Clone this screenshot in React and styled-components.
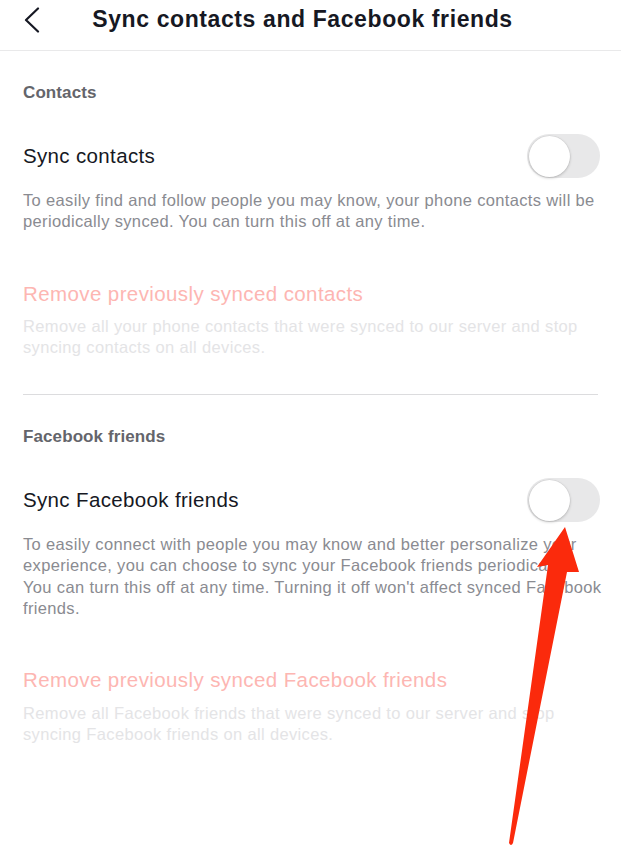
import React, { useState } from "react";
import styled, { createGlobalStyle } from "styled-components";

const GlobalStyle = createGlobalStyle`
  html, body {
    margin: 0;
    padding: 0;
    background: #ffffff;
  }
  body {
    font-family: "Liberation Sans", Arial, sans-serif;
    -webkit-font-smoothing: antialiased;
  }
`;

const Toggle = ({ on, onChange }) => (
  <Track $on={on} onClick={() => onChange(!on)}>
    <Knob $on={on} />
  </Track>
);

const App = () => {
  const [contacts, setContacts] = useState(false);
  const [facebook, setFacebook] = useState(false);

  return (
    <Page>
      <GlobalStyle />
      <Header>
        <BackButton aria-label="Back">
          <svg width="18" height="26" viewBox="0 0 18 26" fill="none">
            <path d="M15 1.5L3 13l12 11.5" stroke="#161823" strokeWidth="2.2" strokeLinecap="round" strokeLinejoin="round" />
          </svg>
        </BackButton>
        <Title>Sync contacts and Facebook friends</Title>
      </Header>

      <Content>
        <Section>
          <SectionHeader>Contacts</SectionHeader>
          <Row>
            <RowTitle>Sync contacts</RowTitle>
            <Toggle on={contacts} onChange={setContacts} />
          </Row>
          <Description>
            To easily find and follow people you may know, your phone contacts will be
            <br />
            periodically synced. You can turn this off at any time.
          </Description>
          <RemoveTitle>Remove previously synced contacts</RemoveTitle>
          <RemoveText>
            Remove all your phone contacts that were synced to our server and stop
            <br />
            syncing contacts on all devices.
          </RemoveText>
        </Section>

        <Divider />

        <Section>
          <SectionHeader>Facebook friends</SectionHeader>
          <Row>
            <RowTitle>Sync Facebook friends</RowTitle>
            <Toggle on={facebook} onChange={setFacebook} />
          </Row>
          <Description>
            To easily connect with people you may know and better personalize your
            <br />
            experience, you can choose to sync your Facebook friends periodically.
            <br />
            You can turn this off at any time. Turning it off won't affect synced Facebook
            <br />
            friends.
          </Description>
          <RemoveTitle>Remove previously synced Facebook friends</RemoveTitle>
          <RemoveText>
            Remove all Facebook friends that were synced to our server and stop
            <br />
            syncing Facebook friends on all devices.
          </RemoveText>
        </Section>
      </Content>

      <Arrow viewBox="0 0 621 853" width="621" height="853">
        <path
          d="M565 527 L537 567 L548 565 L509 843 Q511 847 513 843 L567 572 L579 572 Z"
          fill="#fb2a0c"
        />
      </Arrow>
    </Page>
  );
};

const Page = styled.div`
  position: relative;
  width: 621px;
  min-height: 853px;
  background: #ffffff;
  overflow: hidden;
`;

const Header = styled.header`
  display: flex;
  align-items: center;
  justify-content: center;
  position: relative;
  height: 51px;
  border-bottom: 1px solid #e9e9ea;
  box-sizing: border-box;
  padding: 0 16px 12px 0;
`;

const BackButton = styled.button`
  position: absolute;
  left: 23px;
  top: 7px;
  display: flex;
  padding: 0;
  border: none;
  background: none;
  cursor: pointer;
`;

const Title = styled.h1`
  margin: 0;
  font-size: 23px;
  font-weight: 700;
  color: #161823;
  letter-spacing: 0.6px;
  white-space: nowrap;
`;

const Content = styled.main`
  padding: 0 23px;
`;

const Section = styled.section`
  display: flex;
  flex-direction: column;
`;

const SectionHeader = styled.div`
  margin-top: 30px;
  font-size: 17px;
  line-height: 24px;
  font-weight: 700;
  color: #64656b;
  letter-spacing: 0.1px;
`;

const Row = styled.div`
  display: flex;
  align-items: center;
  justify-content: space-between;
  margin: 29px -2px 0 0;
  height: 44px;
`;

const RowTitle = styled.div`
  font-size: 20.5px;
  letter-spacing: 0.35px;
  color: #161823;
`;

const Track = styled.div`
  position: relative;
  width: 73px;
  height: 44px;
  border-radius: 22px;
  background: ${(p) => (p.$on ? "#20d5ec" : "#e8e8e9")};
  cursor: pointer;
  transition: background 0.2s;
`;

const Knob = styled.div`
  position: absolute;
  top: 1.5px;
  left: ${(p) => (p.$on ? "30.5px" : "1.5px")};
  width: 41px;
  height: 41px;
  border-radius: 50%;
  background: #ffffff;
  box-shadow: 0 1px 3px rgba(0, 0, 0, 0.22), 0 0 0 0.5px rgba(0, 0, 0, 0.06);
  transition: left 0.2s;
`;

const Description = styled.p`
  margin: 12px 0 0;
  font-size: 16.5px;
  line-height: 21.3px;
  letter-spacing: 0.35px;
  color: #8a8b91;
  white-space: nowrap;
`;

const RemoveTitle = styled.div`
  margin-top: 48px;
  font-size: 20.5px;
  line-height: 26px;
  letter-spacing: 0.4px;
  color: #fdb6b2;
`;

const RemoveText = styled.p`
  margin: 9.5px 0 0;
  font-size: 16.5px;
  line-height: 21px;
  letter-spacing: 0.35px;
  color: #e4e4e6;
  white-space: nowrap;
`;

const Divider = styled.hr`
  margin: 36px 0 0;
  border: none;
  border-top: 1px solid #dcdcde;
`;

const Arrow = styled.svg`
  position: absolute;
  top: 0;
  left: 0;
  pointer-events: none;
`;

export default App;
